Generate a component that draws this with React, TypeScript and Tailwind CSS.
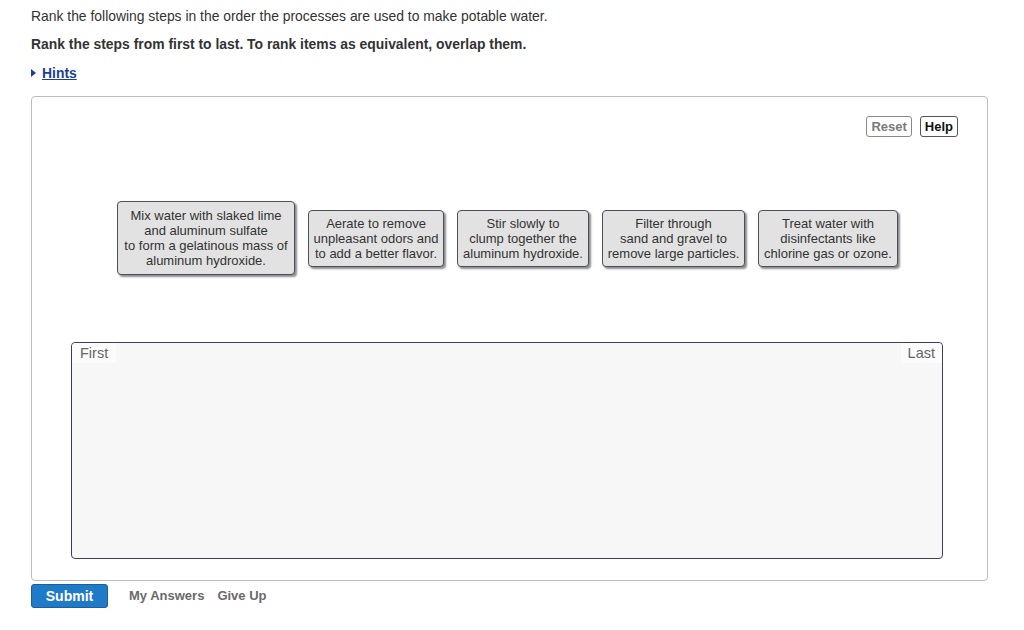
const steps = [
  { w: "w-[178px] py-[6px]", lines: ["Mix water with slaked lime", "and aluminum sulfate", "to form a gelatinous mass of", "aluminum hydroxide."] },
  { w: "w-[136px] py-[5px]", lines: ["Aerate to remove", "unpleasant odors and", "to add a better flavor."] },
  { w: "w-[132px] py-[5px]", lines: ["Stir slowly to", "clump together the", "aluminum hydroxide."] },
  { w: "w-[143px] py-[5px]", lines: ["Filter through", "sand and gravel to", "remove large particles."] },
  { w: "w-[140px] py-[5px]", lines: ["Treat water with", "disinfectants like", "chlorine gas or ozone."] },
];

export default function App() {
  return (
    <main className="min-h-screen w-[1024px] bg-white px-[31px] pt-[8px] font-['Liberation_Sans',Arial,sans-serif] text-[#333]">
      <p className="text-[13.9px] leading-[16px]">
        Rank the following steps in the order the processes are used to make potable water.
      </p>
      <p className="mt-[12px] text-[13.9px] font-bold leading-[16px]">
        Rank the steps from first to last. To rank items as equivalent, overlap them.
      </p>
      <div className="mt-[13px] flex items-center gap-[6px] text-[13.9px] leading-[16px]">
        <span className="h-0 w-0 border-y-[4px] border-l-[5px] border-y-transparent border-l-[#1b3f94]" />
        <a className="font-bold text-[#1b3f94] underline">Hints</a>
      </div>

      <section className="mt-[15px] w-[957px] rounded-[4px] border border-[#bdbdbd] pb-[21px] pt-[19px]">
        <div className="flex justify-end gap-[8px] pr-[29px]">
          <button className="h-[21px] rounded-[3px] border border-[#8a8a8a] px-[4px] text-[13px] font-bold leading-[19px] text-[#7a7a7a]">
            Reset
          </button>
          <button className="h-[21px] rounded-[3px] border border-[#555] px-[4px] text-[13px] font-bold leading-[19px] text-[#111]">
            Help
          </button>
        </div>

        <div className="mt-[64px] flex items-center justify-center gap-[13px] pr-[4px]">
          {steps.map((s, i) => (
            <div
              key={i}
              className={`${s.w} rounded-[4px] border border-[#4e4e5e] bg-[#e2e2e2] text-center text-[13px] leading-[15px] text-[#333] shadow-[2px_2px_2px_rgba(0,0,0,0.45)]`}
            >
              {s.lines.map((l, j) => (
                <div key={j} className="whitespace-nowrap">{l}</div>
              ))}
            </div>
          ))}
        </div>

        <div className="ml-[39px] mt-[67px] h-[217px] w-[872px] rounded-[4px] border border-[#3d3d5c] bg-[#f7f7f7]">
          <div className="flex justify-between">
            <span className="rounded-tl-[4px] bg-[#fcfcfc] px-[8px] text-[14.5px] leading-[20px] text-[#666]">First</span>
            <span className="rounded-tr-[4px] bg-[#fcfcfc] px-[7px] text-[14.5px] leading-[20px] text-[#666]">Last</span>
          </div>
        </div>
      </section>

      <div className="mt-[3px] flex items-center">
        <button className="h-[24px] w-[77px] rounded-[3px] border border-[#1a5f9a] bg-[#1f7ac8] text-[14px] font-bold leading-[22px] text-white">
          Submit
        </button>
        <span className="ml-[21px] text-[13px] font-bold text-[#6a6a6a]">My Answers</span>
        <span className="ml-[13px] text-[13px] font-bold text-[#6a6a6a]">Give Up</span>
      </div>
    </main>
  );
}
